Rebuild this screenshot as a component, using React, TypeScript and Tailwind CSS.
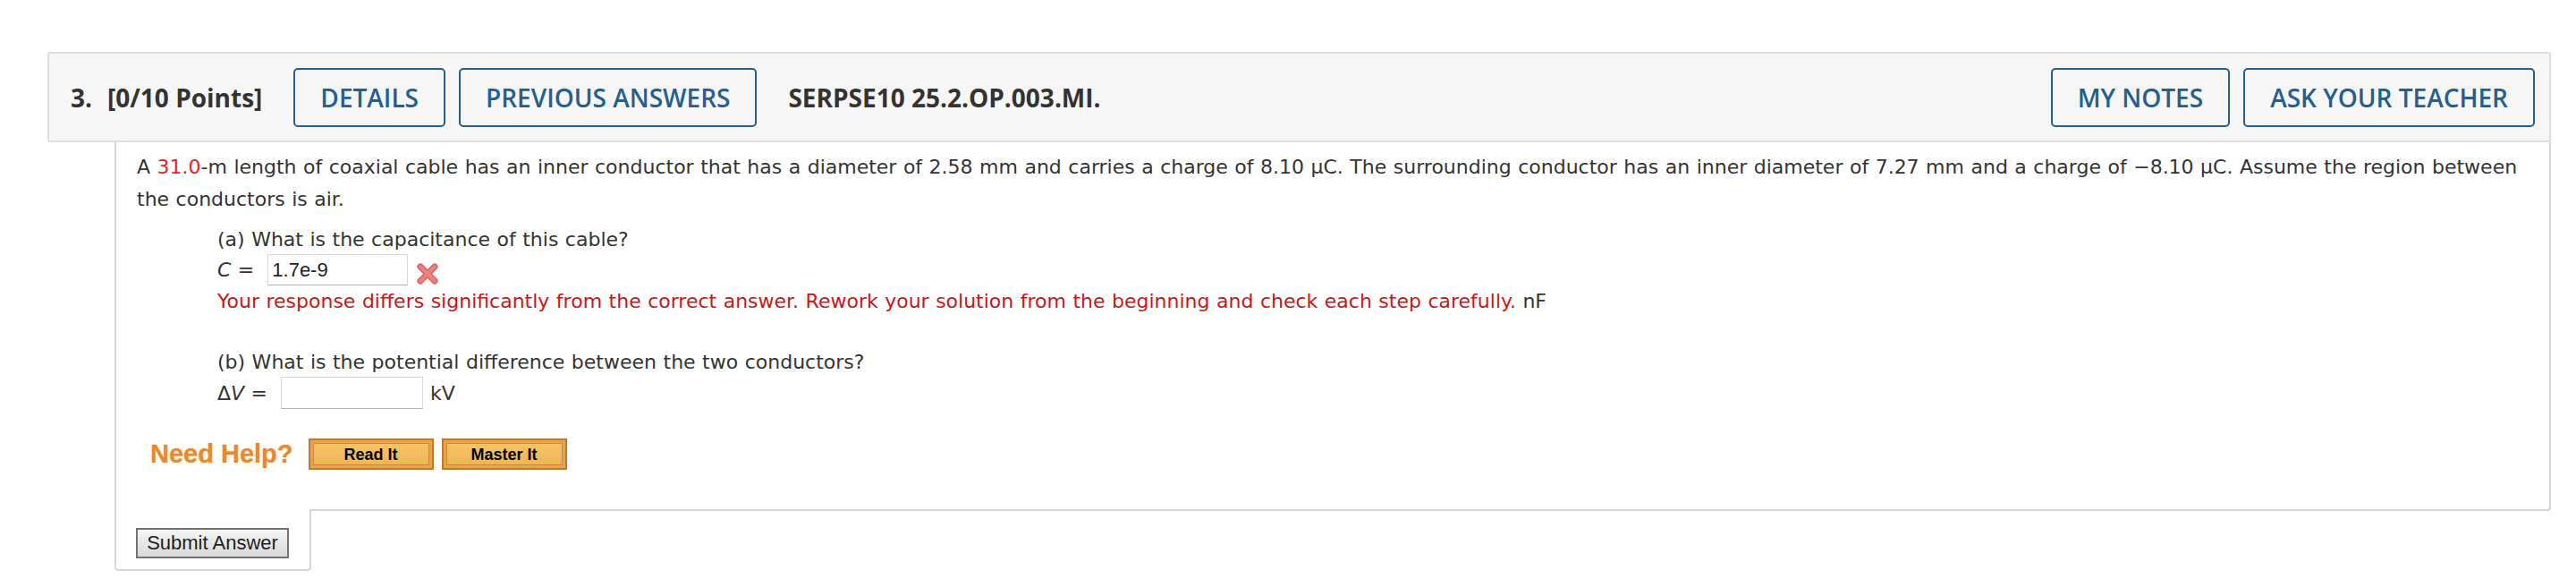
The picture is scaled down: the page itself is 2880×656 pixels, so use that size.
import React from 'react';

const HeaderButton: React.FC<{ label: string }> = ({ label }) => (
  <button className="h-[66px] px-[28px] flex items-center border-2 border-[#245f90] rounded-[5px] bg-transparent text-[28px] font-semibold leading-none text-[#245f90] whitespace-nowrap">
    {label}
  </button>
);

const HelpButton: React.FC<{ label: string }> = ({ label }) => (
  <div className="w-[140px] h-[35px] border-2 border-[#bd7a32] bg-[#eca14c] p-[3px]">
    <div className="h-full flex items-center justify-center border border-[#c58a40] bg-gradient-to-b from-[#f5c465] to-[#eeb656] text-[18px] font-bold leading-none text-black">
      {label}
    </div>
  </div>
);

const WrongMark = () => (
  <svg width="26" height="24" viewBox="0 0 26 24" className="ml-[9px] mt-[8px]">
    <path d="M5 4 L21 20 M21 4 L5 20" stroke="#d95c5c" strokeWidth="7" strokeLinecap="round" />
    <path d="M5 4 L21 20 M21 4 L5 20" stroke="#ee7f7f" strokeWidth="4.5" strokeLinecap="round" />
  </svg>
);

export default function App() {
  return (
    <div className="min-h-screen bg-white pt-[58px] pl-[53px] pr-[28px]">
      {/* question header */}
      <div className="flex items-center h-[101px] border-2 border-[#dedede] rounded-[3px] bg-[#f6f6f6] pl-[24px] pr-[16px] font-['Open_Sans',sans-serif]">
        <span className="text-[28px] font-bold text-[#333]">3.</span>
        <span className="ml-[17px] text-[28px] font-bold text-[#333]">[0/10 Points]</span>
        <div className="ml-[35px] flex gap-[15px]">
          <HeaderButton label="DETAILS" />
          <HeaderButton label="PREVIOUS ANSWERS" />
        </div>
        <span className="ml-[35px] text-[28px] font-bold text-[#333]">SERPSE10 25.2.OP.003.MI.</span>
        <div className="ml-auto flex gap-[15px]">
          <HeaderButton label="MY NOTES" />
          <HeaderButton label="ASK YOUR TEACHER" />
        </div>
      </div>

      {/* question body */}
      <div className="ml-[75px]">
        <div className="border-l-2 border-r-2 border-b-2 border-[#d6d6d6] rounded-br-[4px] pt-[10px] pb-[44px] px-[23px] text-[22px] text-[#333] font-['Verdana','DejaVu_Sans',sans-serif] [word-spacing:0.5px]">
          <p className="leading-[36px]">
            A <span className="text-[#e3261f]">31.0</span>-m length of coaxial cable has an inner conductor that has a diameter of 2.58 mm and carries a charge of 8.10 μC. The surrounding conductor has an inner diameter of 7.27 mm and a charge of −8.10 μC. Assume the region between the conductors is air.
          </p>

          <div className="pl-[90px] mt-[11px]">
            <p className="leading-[32px]">(a) What is the capacitance of this cable?</p>
            <div className="flex items-center h-[35px]">
              <span className="whitespace-pre"><i>C</i> =  </span>
              <input
                readOnly
                value="1.7e-9"
                className="w-[157px] h-[35px] border border-[#d8d8d8] border-b-[#b4b4b4] bg-white pl-[4px] text-[22px] text-[#222] font-['Liberation_Sans',Arial,sans-serif] outline-none"
              />
              <WrongMark />
            </div>
            <p className="mt-[2px] leading-[32px]">
              <span className="text-[#cc1616]">Your response differs significantly from the correct answer. Rework your solution from the beginning and check each step carefully.</span> nF
            </p>

            <p className="mt-[36px] leading-[32px]">(b) What is the potential difference between the two conductors?</p>
            <div className="flex items-center h-[36px]">
              <span className="whitespace-pre">Δ<i>V</i> =  </span>
              <input
                readOnly
                value=""
                className="w-[159px] h-[36px] border border-[#d8d8d8] border-b-[#b4b4b4] bg-white outline-none"
              />
              <span className="ml-[8px]">kV</span>
            </div>
          </div>

          <div className="mt-[33px] pl-[15px] flex items-center h-[35px]">
            <span className="text-[29px] leading-none font-bold text-[#e8892d] font-['Liberation_Sans',Arial,sans-serif] [word-spacing:0] [text-shadow:0_0_2px_rgba(240,150,60,0.6)]">
              Need Help?
            </span>
            <div className="ml-[17px] flex gap-[9px] font-['Liberation_Sans',Arial,sans-serif] [word-spacing:0]">
              <HelpButton label="Read It" />
              <HelpButton label="Master It" />
            </div>
          </div>
        </div>

        {/* submit tab */}
        <div className="-mt-[2px] w-[220px] border-l-2 border-r-2 border-b-2 border-[#d6d6d6] rounded-b-[4px] bg-white pt-[21px] pb-[12px] pl-[22px]">
          <button className="w-[171px] h-[34px] border-2 border-[#727272] bg-gradient-to-b from-[#f5f5f5] to-[#d9d9d9] text-[22px] leading-none text-[#1e1e1e] font-['Liberation_Sans',Arial,sans-serif]">
            Submit Answer
          </button>
        </div>
      </div>
    </div>
  );
}
